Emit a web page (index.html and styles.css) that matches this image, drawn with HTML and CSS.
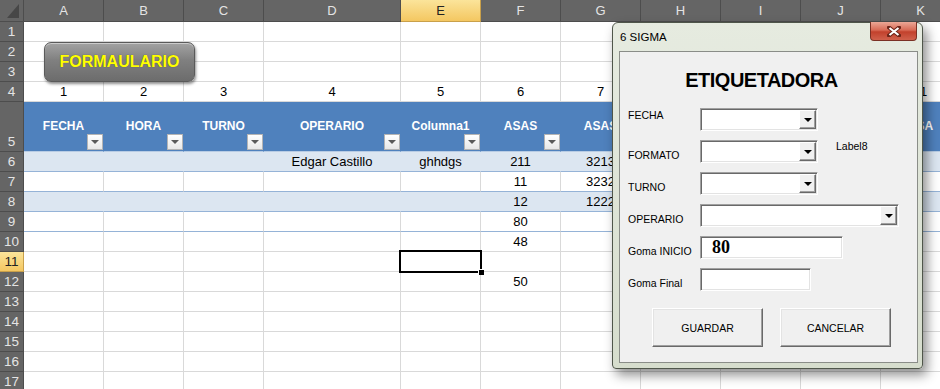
FILE: index.html
```html
<!DOCTYPE html>
<html>
<head>
    <title>Etiquetadora</title>
    <link rel="stylesheet" href="styles.css">
</head>
<body>
<div class="excel">
    <!-- Worksheet -->
    <div class="sheet">
        <div class="ch corner"></div>
        <div class="ch">A</div><div class="ch">B</div><div class="ch">C</div><div class="ch">D</div>
        <div class="ch on">E</div><div class="ch">F</div><div class="ch">G</div><div class="ch">H</div>
        <div class="ch">I</div><div class="ch">J</div><div class="ch">K</div>

        <div class="rh">1</div>
        <div class="c"></div><div class="c"></div><div class="c"></div><div class="c"></div><div class="c"></div><div class="c"></div><div class="c"></div><div class="c"></div><div class="c"></div><div class="c"></div><div class="c"></div>

        <div class="rh">2</div>
        <div class="c"></div><div class="c"></div><div class="c"></div><div class="c"></div><div class="c"></div><div class="c"></div><div class="c"></div><div class="c"></div><div class="c"></div><div class="c"></div><div class="c"></div>

        <div class="rh">3</div>
        <div class="c"></div><div class="c"></div><div class="c"></div><div class="c"></div><div class="c"></div><div class="c"></div><div class="c"></div><div class="c"></div><div class="c"></div><div class="c"></div><div class="c"></div>

        <div class="rh">4</div>
        <div class="c">1</div><div class="c">2</div><div class="c">3</div><div class="c">4</div><div class="c">5</div><div class="c">6</div><div class="c">7</div><div class="c">8</div><div class="c">9</div><div class="c">10</div><div class="c">11</div>

        <!-- Table header -->
        <div class="rh tall">5</div>
        <div class="c th">FECHA<span class="filter"></span></div>
        <div class="c th">HORA<span class="filter"></span></div>
        <div class="c th">TURNO<span class="filter"></span></div>
        <div class="c th">OPERARIO<span class="filter"></span></div>
        <div class="c th">Columna1<span class="filter"></span></div>
        <div class="c th">ASAS<span class="filter"></span></div>
        <div class="c th">ASAS<span class="filter"></span></div>
        <div class="c th">ASAS<span class="filter"></span></div>
        <div class="c th">ASAS<span class="filter"></span></div>
        <div class="c th">ASAS<span class="filter"></span></div>
        <div class="c th">ASA<span class="filter"></span></div>

        <div class="rh">6</div>
        <div class="c band"></div><div class="c band"></div><div class="c band"></div><div class="c band">Edgar Castillo</div><div class="c band">ghhdgs</div><div class="c band">211</div><div class="c band">3213</div><div class="c band"></div><div class="c band"></div><div class="c band"></div><div class="c band"></div>

        <div class="rh">7</div>
        <div class="c row"></div><div class="c row"></div><div class="c row"></div><div class="c row"></div><div class="c row"></div><div class="c row">11</div><div class="c row">3232</div><div class="c row"></div><div class="c row"></div><div class="c row"></div><div class="c row"></div>

        <div class="rh">8</div>
        <div class="c band"></div><div class="c band"></div><div class="c band"></div><div class="c band"></div><div class="c band"></div><div class="c band">12</div><div class="c band">1222</div><div class="c band"></div><div class="c band"></div><div class="c band"></div><div class="c band"></div>

        <div class="rh">9</div>
        <div class="c row"></div><div class="c row"></div><div class="c row"></div><div class="c row"></div><div class="c row"></div><div class="c row">80</div><div class="c row"></div><div class="c row"></div><div class="c row"></div><div class="c row"></div><div class="c row"></div>

        <div class="rh">10</div>
        <div class="c"></div><div class="c"></div><div class="c"></div><div class="c"></div><div class="c"></div><div class="c">48</div><div class="c"></div><div class="c"></div><div class="c"></div><div class="c"></div><div class="c"></div>

        <div class="rh on">11</div>
        <div class="c"></div><div class="c"></div><div class="c"></div><div class="c"></div><div class="c sel"></div><div class="c"></div><div class="c"></div><div class="c"></div><div class="c"></div><div class="c"></div><div class="c"></div>

        <div class="rh">12</div>
        <div class="c"></div><div class="c"></div><div class="c"></div><div class="c"></div><div class="c"></div><div class="c">50</div><div class="c"></div><div class="c"></div><div class="c"></div><div class="c"></div><div class="c"></div>

        <div class="rh">13</div>
        <div class="c"></div><div class="c"></div><div class="c"></div><div class="c"></div><div class="c"></div><div class="c"></div><div class="c"></div><div class="c"></div><div class="c"></div><div class="c"></div><div class="c"></div>

        <div class="rh">14</div>
        <div class="c"></div><div class="c"></div><div class="c"></div><div class="c"></div><div class="c"></div><div class="c"></div><div class="c"></div><div class="c"></div><div class="c"></div><div class="c"></div><div class="c"></div>

        <div class="rh">15</div>
        <div class="c"></div><div class="c"></div><div class="c"></div><div class="c"></div><div class="c"></div><div class="c"></div><div class="c"></div><div class="c"></div><div class="c"></div><div class="c"></div><div class="c"></div>

        <div class="rh">16</div>
        <div class="c"></div><div class="c"></div><div class="c"></div><div class="c"></div><div class="c"></div><div class="c"></div><div class="c"></div><div class="c"></div><div class="c"></div><div class="c"></div><div class="c"></div>

        <div class="rh">17</div>
        <div class="c"></div><div class="c"></div><div class="c"></div><div class="c"></div><div class="c"></div><div class="c"></div><div class="c"></div><div class="c"></div><div class="c"></div><div class="c"></div><div class="c"></div>
    </div>

    <!-- Shape button on the sheet -->
    <div class="shape-btn">FORMAULARIO</div>

    <!-- UserForm -->
    <div class="dialog">
        <div class="titlebar">
            <span>6 SIGMA</span>
            <div class="close">
                <svg width="14" height="11" viewBox="0 0 14 11">
                    <path d="M2 1.5 L12 9.5 M12 1.5 L2 9.5" stroke="#6b2418" stroke-width="4" stroke-linecap="square"/>
                    <path d="M2.5 2 L11.5 9 M11.5 2 L2.5 9" stroke="#fff" stroke-width="2.2"/>
                </svg>
            </div>
        </div>
        <div class="panel">
            <div class="form-title">ETIQUETADORA</div>
            <div class="fields">
                <div class="field">
                    <label class="first">FECHA</label>
                    <div class="box combo short"><span class="drop"></span></div>
                </div>
                <div class="field">
                    <label>FORMATO</label>
                    <div class="box combo short"><span class="drop"></span></div>
                    <span class="label8">Label8</span>
                </div>
                <div class="field">
                    <label>TURNO</label>
                    <div class="box combo short"><span class="drop"></span></div>
                </div>
                <div class="field">
                    <label>OPERARIO</label>
                    <div class="box combo long"><span class="drop"></span></div>
                </div>
                <div class="field">
                    <label>Goma INICIO</label>
                    <div class="box text-in wide"><span class="value">80</span></div>
                </div>
                <div class="field">
                    <label>Goma Final</label>
                    <div class="box text-in narrow"></div>
                </div>
            </div>
            <div class="actions">
                <button class="btn">GUARDAR</button>
                <button class="btn">CANCELAR</button>
            </div>
        </div>
    </div>
</div>
</body>
</html>
```

FILE: styles.css
```css
body {
    margin: 0;
    overflow: hidden;
    font-family: "Liberation Sans", Arial, sans-serif;
    background: #fff;
}

.excel {
    position: relative;
    width: 940px;
    height: 389px;
    overflow: hidden;
}

/* Worksheet grid */
.sheet {
    display: grid;
    grid-template-columns: 24px 80px 80px 80px 137px repeat(7, 80px);
    grid-template-rows: 22px repeat(4, 20px) 50px repeat(12, 20px);
    width: 961px;
}

.c, .ch, .rh {
    box-sizing: border-box;
    border-right: 1px solid #d9d9d9;
    border-bottom: 1px solid #d9d9d9;
    font-size: 13px;
    display: flex;
    align-items: center;
    justify-content: center;
    white-space: nowrap;
    overflow: hidden;
    color: #000;
}

/* Column & row headings */
.ch, .rh {
    background: #656565;
    color: #e4e4e4;
    border-color: #4d4d4d;
}
.rh {
    font-size: 13.5px;
}
.rh.tall {
    align-items: flex-end;
    padding-bottom: 2px;
}
.ch.on, .rh.on {
    background: linear-gradient(#fbe49a, #f4c761);
    color: #222;
    border-color: #c9a04a;
}
.corner {
    position: relative;
}
.corner::after {
    content: '';
    position: absolute;
    right: 4px;
    bottom: 3px;
    width: 12px;
    height: 14px;
    background: #474747;
    clip-path: polygon(100% 0, 100% 100%, 0 100%);
}

/* Table */
.th {
    position: relative;
    background: #4f81bd;
    border-right-color: #4f81bd;
    border-bottom-color: #b8cce4;
    color: #fff;
    font-weight: bold;
    font-size: 12px;
    padding-bottom: 2px;
}
.filter {
    position: absolute;
    right: 0;
    bottom: 1px;
    width: 16px;
    height: 16px;
    box-sizing: border-box;
    border: 1px solid #b4b4b4;
    background: linear-gradient(#ffffff, #e8e8e8);
    display: flex;
    align-items: center;
    justify-content: center;
}
.filter::after {
    content: '';
    border-left: 4px solid transparent;
    border-right: 4px solid transparent;
    border-top: 4px solid #5a5a5a;
}
.band {
    background: #dce6f1;
    border-right-color: #dce6f1;
    border-bottom-color: #95b3d7;
}
.row {
    border-bottom-color: #95b3d7;
}

/* Active cell */
.sel {
    position: relative;
    overflow: visible;
    z-index: 2;
}
.sel::after {
    content: '';
    position: absolute;
    left: -2px;
    top: -2px;
    right: -2px;
    bottom: -2px;
    border: 2px solid #000;
}
.sel::before {
    content: '';
    position: absolute;
    right: -4px;
    bottom: -4px;
    width: 5px;
    height: 5px;
    background: #000;
    border-left: 1px solid #fff;
    border-top: 1px solid #fff;
    z-index: 1;
}

/* Floating shape */
.shape-btn {
    position: absolute;
    left: 44px;
    top: 42px;
    width: 151px;
    height: 40px;
    box-sizing: border-box;
    border: 1px solid #5a5a5a;
    border-radius: 7px;
    background: linear-gradient(#a3a3a3, #808080 45%, #6c6c6c);
    box-shadow: 1px 2px 3px rgba(0, 0, 0, 0.45), inset 0 1px 0 rgba(255, 255, 255, 0.45);
    color: #ffff00;
    font-weight: bold;
    font-size: 16px;
    display: flex;
    align-items: center;
    justify-content: center;
    text-shadow: 0 0 1px #4a4a4a;
}

/* UserForm window */
.dialog {
    position: absolute;
    left: 612px;
    top: 22px;
    width: 311px;
    height: 347px;
    box-sizing: border-box;
    border: 1px solid #4f564a;
    border-radius: 6px 6px 4px 4px;
    background: linear-gradient(#e6ebe0, #d6ddcd);
    box-shadow: 4px 6px 12px rgba(0, 0, 0, 0.45);
    display: flex;
    flex-direction: column;
    font-family: "Liberation Sans", Arial, sans-serif;
}
.titlebar {
    position: relative;
    height: 28px;
    padding-left: 7px;
    display: flex;
    align-items: center;
    font-size: 11.5px;
    color: #000;
}
.close {
    position: absolute;
    right: 5px;
    top: -1px;
    width: 47px;
    height: 19px;
    box-sizing: border-box;
    border: 1px solid #7a3024;
    border-top: none;
    border-radius: 0 0 4px 4px;
    background: linear-gradient(#eba796, #d86a55 45%, #c2412c 55%, #d0614c);
    display: flex;
    align-items: center;
    justify-content: center;
}
.panel {
    flex: 1;
    margin: 0 4px 5px 6px;
    border: 1px solid #8a8d88;
    background: #f0f0f0;
    display: flex;
    flex-direction: column;
}
.form-title {
    margin-top: 16px;
    padding-right: 14px;
    height: 24px;
    line-height: 24px;
    text-align: center;
    font-weight: bold;
    font-size: 20px;
    letter-spacing: -0.5px;
    color: #000;
}
.fields {
    margin-top: 16px;
    padding-left: 8px;
    display: flex;
    flex-direction: column;
    gap: 9px;
}
.field {
    display: flex;
    height: 23px;
}
.field label {
    width: 72px;
    flex: none;
    font-size: 10.5px;
    line-height: 13px;
    padding-top: 9px;
    color: #000;
}
.field label.first {
    padding-top: 1px;
}
.label8 {
    margin-left: 18px;
    font-size: 10.5px;
    line-height: 13px;
    padding-top: 0;
    color: #000;
}

/* Sunken controls */
.box {
    height: 23px;
    box-sizing: border-box;
    background: #fff;
    border: 1px solid;
    border-color: #a0a0a0 #fff #fff #a0a0a0;
    box-shadow: inset 1px 1px 0 #696969, inset -1px -1px 0 #e3e3e3;
}
.combo {
    display: flex;
    justify-content: flex-end;
    padding: 1px;
}
.short { width: 118px; }
.long { width: 199px; }
.wide { width: 143px; }
.narrow { width: 111px; }
.drop {
    width: 17px;
    box-sizing: border-box;
    background: #f0f0f0;
    border: 1px solid;
    border-color: #fff #696969 #696969 #fff;
    box-shadow: inset -1px -1px 0 #a0a0a0;
    display: flex;
    align-items: center;
    justify-content: center;
}
.drop::after {
    content: '';
    border-left: 4px solid transparent;
    border-right: 4px solid transparent;
    border-top: 4px solid #000;
}
.text-in {
    display: flex;
    align-items: center;
    padding-left: 11px;
}
.value {
    font-family: "Liberation Serif", "Times New Roman", serif;
    font-weight: bold;
    font-size: 18px;
    color: #000;
}

/* Buttons */
.actions {
    margin-top: 17px;
    padding-left: 32px;
    display: flex;
    gap: 17px;
}
.btn {
    width: 111px;
    height: 39px;
    box-sizing: border-box;
    background: #f0f0f0;
    border: 1px solid;
    border-color: #fff #696969 #696969 #fff;
    box-shadow: inset -1px -1px 0 #a0a0a0, inset 1px 1px 0 #e3e3e3;
    font-family: "Liberation Sans", Arial, sans-serif;
    font-size: 10.5px;
    color: #000;
    padding: 0;
}
```
